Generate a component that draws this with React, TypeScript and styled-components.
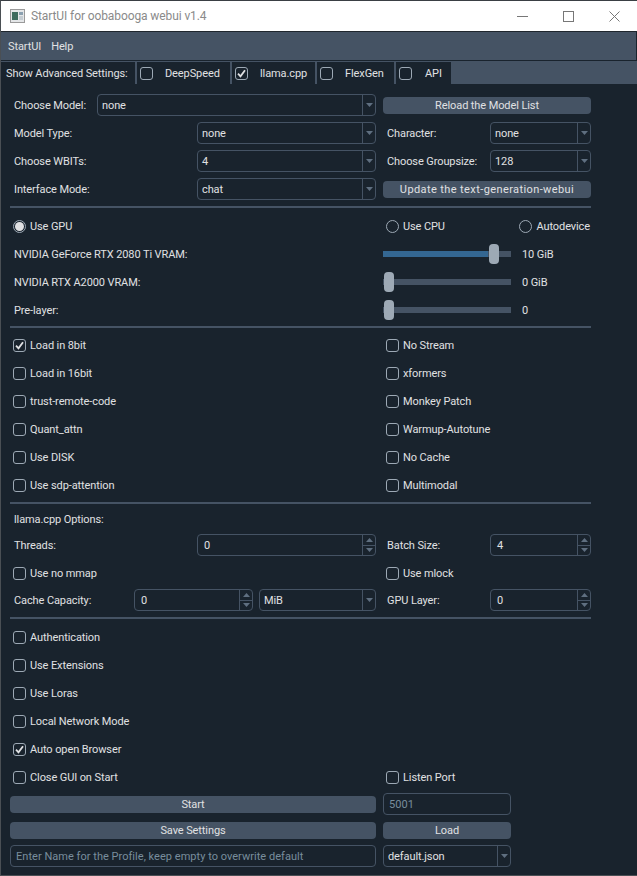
import React from 'react'
import styled, { createGlobalStyle } from 'styled-components'

const GlobalStyle = createGlobalStyle`
  html, body {
    margin: 0;
    padding: 0;
    background: #19232d;
  }
  * {
    box-sizing: border-box;
  }
`

const Window = styled.div`
  width: 637px;
  height: 876px;
  border-top: 1px solid #3a3f44;
  border-left: 1px solid #4a4f54;
  border-bottom: 1px solid #4a4f54;
  display: flex;
  flex-direction: column;
  overflow: hidden;
  background: #19232d;
  color: #e0e1e3;
  font-family: Roboto, 'Liberation Sans', sans-serif;
  font-size: 11px;
  letter-spacing: -0.1px;
`

const TitleBar = styled.div`
  height: 31px;
  flex: none;
  background: #fff;
  border-bottom: 1px solid #1f262d;
  display: flex;
  align-items: center;
  padding-left: 9px;
`

const TitleText = styled.span`
  margin-left: 6px;
  flex: 1;
  font-size: 12px;
  color: #8a8a8a;
`

const WinButton = styled.span`
  width: 46px;
  height: 30px;
  display: flex;
  align-items: center;
  justify-content: center;
  color: #777;
`

const MenuBar = styled.div`
  height: 29px;
  flex: none;
  background: #455364;
  border-bottom: 1px solid #19232d;
  border-right: 1px solid #19232d;
  display: flex;
  align-items: center;
  padding-left: 7px;
  gap: 10px;
`

const TabBar = styled.div`
  height: 23px;
  flex: none;
  background: #455364;
  display: flex;
  gap: 2px;
  padding-top: 1px;
`

const Tab = styled.div<{ $w: number }>`
  width: ${(p) => p.$w}px;
  background: #19232d;
  display: flex;
  align-items: center;
  padding-left: ${(p) => (p.$w > 120 ? 5 : 3)}px;
  white-space: nowrap;
`

const TabLabel = styled.span<{ $gap?: number }>`
  margin-left: ${(p) => p.$gap ?? 12}px;
`

const Body = styled.div`
  flex: 1;
  display: flex;
  flex-direction: column;
  gap: 6px;
  padding: 10px 45px 0 9px;
`

const Row = styled.div<{ $nudge?: number }>`
  display: grid;
  grid-template-columns: 366px 208px;
  column-gap: 7px;
  height: 22px;
  margin-top: ${(p) => p.$nudge ?? 0}px;
`

const Field = styled.div`
  display: flex;
  align-items: center;
  min-width: 0;
`

const FieldLabel = styled.span<{ $w: number }>`
  flex: none;
  width: ${(p) => p.$w}px;
  padding-left: 4px;
  white-space: nowrap;
`

const Box = styled.div<{ $w?: number; $mr?: number }>`
  flex: ${(p) => (p.$w ? 'none' : '1')};
  width: ${(p) => (p.$w ? `${p.$w}px` : 'auto')};
  margin-right: ${(p) => p.$mr ?? 0}px;
  height: 22px;
  border: 1px solid #455364;
  border-radius: 4px;
  display: flex;
  align-items: center;
  min-width: 0;
`

const BoxText = styled.span<{ $pad?: number }>`
  flex: 1;
  padding-left: ${(p) => p.$pad ?? 4}px;
  white-space: nowrap;
`

const MutedText = styled.span`
  flex: 1;
  padding-left: 5px;
  white-space: nowrap;
  color: #788d9c;
  letter-spacing: 0.03px;
`

const ArrowCell = styled.span`
  flex: none;
  width: 13px;
  height: 100%;
  border-left: 1px solid #455364;
  display: flex;
  flex-direction: column;
  align-items: center;
  justify-content: center;
`

const SpinCell = styled.span`
  flex: 1;
  width: 100%;
  display: flex;
  align-items: center;
  justify-content: center;
  & + & {
    border-top: 1px solid #455364;
  }
`

const Button = styled.div<{ $w?: number; $spacing?: number }>`
  height: 17px;
  align-self: center;
  width: ${(p) => (p.$w ? `${p.$w}px` : '100%')};
  background: #455364;
  border-radius: 4px;
  display: flex;
  align-items: center;
  justify-content: center;
  white-space: nowrap;
  letter-spacing: ${(p) => p.$spacing ?? -0.1}px;
`

const Separator = styled.div<{ $nudge?: number }>`
  height: 2px;
  width: 581px;
  background: #455364;
  margin-top: ${(p) => p.$nudge ?? 0}px;
`

const Check = styled.span`
  flex: none;
  width: 13px;
  height: 13px;
  border: 1px solid #9da9b5;
  border-radius: 3px;
  display: inline-flex;
  align-items: center;
  justify-content: center;
`

const CheckRow = styled.div`
  display: flex;
  align-items: center;
  gap: 4px;
  padding-left: 3px;
  white-space: nowrap;
`

const RadioItem = styled.span`
  display: flex;
  align-items: center;
  gap: 4px;
  white-space: nowrap;
`

const Dot = styled.span<{ $on?: boolean }>`
  flex: none;
  width: 13px;
  height: 13px;
  border: 1px solid #9da9b5;
  border-radius: 50%;
  display: inline-flex;
  align-items: center;
  justify-content: center;
  &::after {
    content: '';
    width: 9px;
    height: 9px;
    border-radius: 50%;
    background: ${(p) => (p.$on ? '#e0e1e3' : 'transparent')};
  }
`

const RadioRight = styled.div`
  display: flex;
  justify-content: space-between;
  padding: 0 1px 0 3px;
  align-items: center;
`

const SliderField = styled.div`
  display: flex;
  align-items: center;
`

const Track = styled.div`
  width: 128px;
  height: 6px;
  background: #455364;
  display: flex;
  align-items: center;
  flex: none;
`

const TrackFill = styled.div<{ $w: number }>`
  height: 100%;
  width: ${(p) => p.$w}px;
  background: #346792;
`

const Handle = styled.div`
  flex: none;
  width: 10px;
  height: 20px;
  margin-left: 1px;
  background: #9da9b5;
  border-radius: 4px;
`

const SliderValue = styled.span`
  margin-left: 11px;
`

const Caption = styled.div`
  height: 18px;
  padding-left: 4px;
  display: flex;
  align-items: center;
`

const Tick = () => (
  <svg width="9" height="9" viewBox="0 0 9 9">
    <path d="M1 4.6 L3.5 7.4 L8 1.2" fill="none" stroke="#e0e1e3" strokeWidth="1.8" />
  </svg>
)

const CheckMark = ({ on }: { on?: boolean }) => <Check>{on && <Tick />}</Check>

const Down = () => (
  <svg width="7" height="4" viewBox="0 0 7 4">
    <path d="M0 0 H7 L3.5 4 Z" fill="#5f6f80" />
  </svg>
)

const Up = () => (
  <svg width="7" height="4" viewBox="0 0 7 4">
    <path d="M0 4 H7 L3.5 0 Z" fill="#5f6f80" />
  </svg>
)

const Combo = ({ value, w }: { value: string; w?: number }) => (
  <Box $w={w}>
    <BoxText>{value}</BoxText>
    <ArrowCell>
      <Down />
    </ArrowCell>
  </Box>
)

const Spin = ({ value, w, mr }: { value: string; w?: number; mr?: number }) => (
  <Box $w={w} $mr={mr}>
    <BoxText $pad={6}>{value}</BoxText>
    <ArrowCell>
      <SpinCell>
        <Up />
      </SpinCell>
      <SpinCell>
        <Down />
      </SpinCell>
    </ArrowCell>
  </Box>
)

const CheckItem = ({ label, on }: { label: string; on?: boolean }) => (
  <CheckRow>
    <CheckMark on={on} />
    <span>{label}</span>
  </CheckRow>
)

const Slider = ({ fill, value }: { fill: number; value: string }) => (
  <SliderField>
    <Track>
      <TrackFill $w={fill} />
      <Handle />
    </Track>
    <SliderValue>{value}</SliderValue>
  </SliderField>
)

const checkRows: Array<[string, string, boolean?]> = [
  ['Load in 8bit', 'No Stream', true],
  ['Load in 16bit', 'xformers'],
  ['trust-remote-code', 'Monkey Patch'],
  ['Quant_attn', 'Warmup-Autotune'],
  ['Use DISK', 'No Cache'],
  ['Use sdp-attention', 'Multimodal'],
]

export default function App() {
  return (
    <>
      <GlobalStyle />
      <Window>
        <TitleBar>
          <svg width="15" height="14" viewBox="0 0 15 14">
            <rect x="0.5" y="0.5" width="14" height="13" fill="#e4e6e8" stroke="#9a9a9a" />
            <rect x="2" y="3" width="6" height="8" fill="#3d6b5e" />
            <rect x="9" y="3" width="4" height="3" fill="#8aa0b0" />
            <rect x="9" y="7" width="4" height="4" fill="#c4ccd2" />
          </svg>
          <TitleText>StartUI for oobabooga webui v1.4</TitleText>
          <WinButton>
            <svg width="11" height="11" viewBox="0 0 11 11">
              <path d="M0 5.5 H11" stroke="currentColor" />
            </svg>
          </WinButton>
          <WinButton>
            <svg width="11" height="11" viewBox="0 0 11 11">
              <rect x="0.5" y="0.5" width="10" height="10" fill="none" stroke="currentColor" />
            </svg>
          </WinButton>
          <WinButton>
            <svg width="11" height="11" viewBox="0 0 11 11">
              <path d="M0.5 0.5 L10.5 10.5 M10.5 0.5 L0.5 10.5" stroke="currentColor" />
            </svg>
          </WinButton>
        </TitleBar>
        <MenuBar>
          <span>StartUI</span>
          <span>Help</span>
        </MenuBar>
        <TabBar>
          <Tab $w={134}>Show Advanced Settings:</Tab>
          <Tab $w={93}>
            <CheckMark />
            <TabLabel>DeepSpeed</TabLabel>
          </Tab>
          <Tab $w={83}>
            <CheckMark on />
            <TabLabel>llama.cpp</TabLabel>
          </Tab>
          <Tab $w={77}>
            <CheckMark />
            <TabLabel>FlexGen</TabLabel>
          </Tab>
          <Tab $w={55}>
            <CheckMark />
            <TabLabel $gap={13}>API</TabLabel>
          </Tab>
        </TabBar>
        <Body>
          <Row>
            <Field>
              <FieldLabel $w={87}>Choose Model:</FieldLabel>
              <Combo value="none" />
            </Field>
            <Field>
              <Button>Reload the Model List</Button>
            </Field>
          </Row>
          <Row>
            <Field>
              <FieldLabel $w={187}>Model Type:</FieldLabel>
              <Combo value="none" />
            </Field>
            <Field>
              <FieldLabel $w={107}>Character:</FieldLabel>
              <Combo value="none" />
            </Field>
          </Row>
          <Row>
            <Field>
              <FieldLabel $w={187}>Choose WBITs:</FieldLabel>
              <Combo value="4" />
            </Field>
            <Field>
              <FieldLabel $w={107}>Choose Groupsize:</FieldLabel>
              <Combo value="128" />
            </Field>
          </Row>
          <Row>
            <Field>
              <FieldLabel $w={187}>Interface Mode:</FieldLabel>
              <Combo value="chat" />
            </Field>
            <Field>
              <Button $spacing={0.4}>Update the text-generation-webui</Button>
            </Field>
          </Row>
          <Separator />
          <Row $nudge={1}>
            <CheckRow>
              <Dot $on />
              <span>Use GPU</span>
            </CheckRow>
            <RadioRight>
              <RadioItem>
                <Dot />
                <span>Use CPU</span>
              </RadioItem>
              <RadioItem>
                <Dot />
                <span>Autodevice</span>
              </RadioItem>
            </RadioRight>
          </Row>
          <Row>
            <Field>
              <FieldLabel $w={187}>NVIDIA GeForce RTX 2080 Ti VRAM:</FieldLabel>
            </Field>
            <Slider fill={105} value="10 GiB" />
          </Row>
          <Row>
            <Field>
              <FieldLabel $w={187}>NVIDIA RTX A2000 VRAM:</FieldLabel>
            </Field>
            <Slider fill={0} value="0 GiB" />
          </Row>
          <Row>
            <Field>
              <FieldLabel $w={187}>Pre-layer:</FieldLabel>
            </Field>
            <Slider fill={0} value="0" />
          </Row>
          <Separator $nudge={-1} />
          {checkRows.map(([left, right, on]) => (
            <Row key={left}>
              <CheckItem label={left} on={on} />
              <CheckItem label={right} />
            </Row>
          ))}
          <Separator />
          <Caption>llama.cpp Options:</Caption>
          <Row>
            <Field>
              <FieldLabel $w={187}>Threads:</FieldLabel>
              <Spin value="0" />
            </Field>
            <Field>
              <FieldLabel $w={107}>Batch Size:</FieldLabel>
              <Spin value="4" />
            </Field>
          </Row>
          <Row>
            <CheckItem label="Use no mmap" />
            <CheckItem label="Use mlock" />
          </Row>
          <Row $nudge={-1}>
            <Field>
              <FieldLabel $w={124}>Cache Capacity:</FieldLabel>
              <Spin value="0" w={119} mr={6} />
              <Combo value="MiB" />
            </Field>
            <Field>
              <FieldLabel $w={107}>GPU Layer:</FieldLabel>
              <Spin value="0" />
            </Field>
          </Row>
          <Separator />
          <Row $nudge={1}>
            <CheckItem label="Authentication" />
          </Row>
          <Row>
            <CheckItem label="Use Extensions" />
          </Row>
          <Row>
            <CheckItem label="Use Loras" />
          </Row>
          <Row>
            <CheckItem label="Local Network Mode" />
          </Row>
          <Row>
            <CheckItem label="Auto open Browser" on />
          </Row>
          <Row>
            <CheckItem label="Close GUI on Start" />
            <CheckItem label="Listen Port" />
          </Row>
          <Row $nudge={-1}>
            <Field>
              <Button>Start</Button>
            </Field>
            <Field>
              <Box $w={128}>
                <MutedText>5001</MutedText>
              </Box>
            </Field>
          </Row>
          <Row $nudge={-2}>
            <Field>
              <Button>Save Settings</Button>
            </Field>
            <Field>
              <Button $w={128}>Load</Button>
            </Field>
          </Row>
          <Row $nudge={-2}>
            <Field>
              <Box>
                <MutedText>Enter Name for the Profile, keep empty to overwrite default</MutedText>
              </Box>
            </Field>
            <Field>
              <Combo value="default.json" w={128} />
            </Field>
          </Row>
        </Body>
      </Window>
    </>
  )
}
